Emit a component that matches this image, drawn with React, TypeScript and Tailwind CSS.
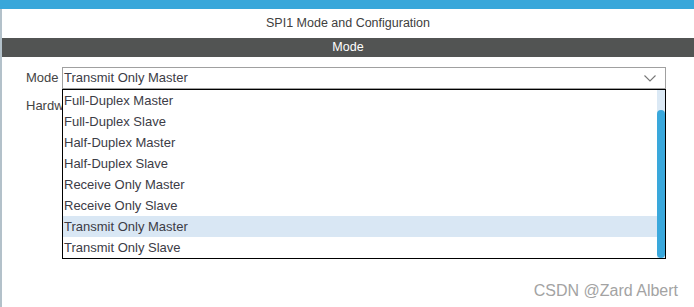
const options = [
  "Full-Duplex Master",
  "Full-Duplex Slave",
  "Half-Duplex Master",
  "Half-Duplex Slave",
  "Receive Only Master",
  "Receive Only Slave",
  "Transmit Only Master",
  "Transmit Only Slave",
];

export default function App() {
  const selected = "Transmit Only Master";

  return (
    <div className="relative h-[307px] w-[694px] overflow-hidden bg-white font-['Liberation_Sans',Arial,sans-serif]">
      {/* top accent bar */}
      <div className="h-[9px] bg-[#38a7da]" />

      <div className="flex h-[298px] flex-col border-l-2 border-[#b3c1ca]">
        <div className="flex h-[29px] items-center justify-center text-[12.5px] text-[#404040]">
          SPI1 Mode and Configuration
        </div>
        <div className="flex h-[19px] items-center justify-center bg-[#525453] text-[12.5px] text-white">
          Mode
        </div>

        <div className="flex flex-col gap-[6px] pt-[10px]">
          {/* Mode row */}
          <div className="flex items-center">
            <span className="w-[60px] pl-[24px] text-[13px] text-[#444]">Mode</span>
            <div className="relative">
              <div className="flex h-[22px] w-[604px] items-center justify-between border border-[#a0a0a0] pl-[1px] pr-[9px] text-[13px] text-[#3c3c46]">
                <span>{selected}</span>
                <svg width="12" height="7" viewBox="0 0 12 7" fill="none">
                  <path d="M0.5 0.5 L6 6 L11.5 0.5" stroke="#777" strokeWidth="1.1" />
                </svg>
              </div>

              {/* open list */}
              <div className="absolute left-0 top-[22px] z-10 flex h-[170px] w-[604px] border border-black bg-white">
                <ul className="flex-1">
                  {options.map((opt) => (
                    <li
                      key={opt}
                      className={`flex h-[21px] items-center pl-[1px] text-[13px] text-[#3c3c46] ${
                        opt === selected ? "bg-[#d9e7f4]" : ""
                      }`}
                    >
                      {opt}
                    </li>
                  ))}
                </ul>
                <div className="flex w-[8px] flex-col bg-[#dbe9f5]">
                  <div className="h-[20px]" />
                  <div className="flex-1 rounded-[4px] bg-[#3aa8dc]" />
                </div>
              </div>
            </div>
          </div>

          {/* Hardware row, cut off by the open list */}
          <div className="flex h-[22px] items-center">
            <span className="whitespace-nowrap pl-[24px] text-[13px] text-[#444]">Hardw</span>
          </div>
        </div>
      </div>

      {/* watermark */}
      <div className="absolute bottom-[7px] right-[16px] text-[16px] leading-[18px] text-[#a3a3a3]">
        CSDN @Zard Albert
      </div>
    </div>
  );
}
